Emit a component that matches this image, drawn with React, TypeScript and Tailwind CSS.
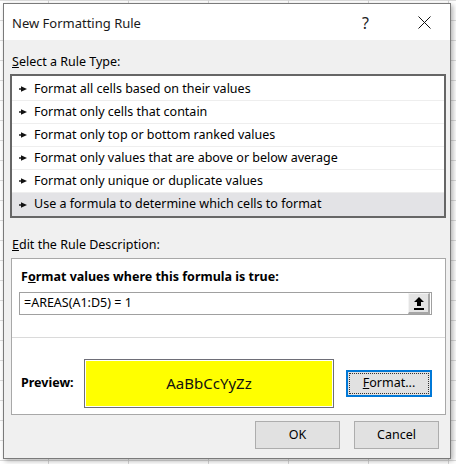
import React from "react";

const Arrow = () => (
  <svg width="8" height="6" viewBox="0 0 8 6" className="shrink-0">
    <rect x="0" y="2.3" width="3" height="1.4" fill="#111" />
    <polygon points="2,0.3 8,3 2,5.7" fill="#111" />
  </svg>
);

const rules = [
  "Format all cells based on their values",
  "Format only cells that contain",
  "Format only top or bottom ranked values",
  "Format only values that are above or below average",
  "Format only unique or duplicate values",
  "Use a formula to determine which cells to format",
];

export default function App() {
  return (
    <div
      className="w-[456px] h-[464px] overflow-hidden bg-white bg-[linear-gradient(90deg,#d6d6d6_1px,transparent_1px),linear-gradient(#dcdcdc_1px,transparent_1px)] bg-[size:80px_20px] bg-[position:48px_0] pt-[3px] pl-[3px] text-[#000]"
      style={{ fontFamily: '"Noto Sans", "Open Sans", sans-serif' }}
    >
      <div className="w-[448px] h-[456px] border border-[#7a7a7a] bg-[#f0f0f0] flex flex-col shadow-[2px_2px_5px_rgba(0,0,0,0.3)]">
        {/* Title bar */}
        <div className="h-[36px] bg-white flex items-center shrink-0">
          <div className="ml-[8px] text-[13px] leading-[20px] text-[#1a1a1a] mt-[2px]">
            New Formatting Rule
          </div>
          <div className="ml-auto mr-[49px] text-[16px] leading-[20px] text-[#222] mt-[2px]">?</div>
          <svg width="13" height="13" viewBox="0 0 13 13" className="mr-[19px] mt-[1px]">
            <path d="M0.5 0.5 L12.5 12.5 M12.5 0.5 L0.5 12.5" stroke="#111" strokeWidth="1" />
          </svg>
        </div>

        {/* Body */}
        <div className="ml-[8px] mt-[12px] text-[12.5px] leading-[20px]">
          <span className="underline">S</span>elect a Rule Type:
        </div>
        <div className="ml-[6px] mt-[2px] w-[436px] border-2 border-[#666666] bg-white pt-[2px] flex flex-col">
          {rules.map((r, i) => (
            <div
              key={r}
              className={
                "h-[23px] flex items-center gap-[7px] pl-[7px] text-[12.5px] " +
                (i === rules.length - 1
                  ? "bg-[#e3e3e6]"
                  : "border-b border-[#eeeeee]")
              }
            >
              <Arrow />
              <span>{r}</span>
            </div>
          ))}
        </div>

        <div className="ml-[8px] mt-[17px] text-[12.5px] leading-[20px]">
          <span className="underline">E</span>dit the Rule Description:
        </div>

        <div className="ml-[7px] mt-[3px] w-[435px] h-[157px] border border-[#a8a8a8] bg-white flex flex-col">
          <div className="ml-[9px] mt-[8px] text-[12.5px] leading-[20px] font-bold">
            F<span className="underline">o</span>rmat values where this formula is true:
          </div>
          <div className="ml-[7px] mt-[5px] w-[413px] h-[23px] border border-[#a0a0a0] flex items-center">
            <span className="ml-[4px] text-[12.5px]">=AREAS(A1:D5) = 1</span>
            <div className="ml-auto mr-px w-[22px] h-[21px] bg-[#e4e4e4] border-t border-l border-t-[#f4f4f4] border-l-[#f4f4f4] border-r-2 border-b-2 border-r-[#a6a6a6] border-b-[#a6a6a6] flex items-center justify-center">
              <svg width="10" height="13" viewBox="0 0 10 13">
                <polygon points="5,0 10,5 7,5 7,9 3,9 3,5 0,5" fill="#000" />
                <rect x="0" y="11" width="10" height="2" fill="#000" />
              </svg>
            </div>
          </div>
          <div className="mt-[22px] h-px bg-[#dadada]" />
          <div className="mt-[21px] flex items-center">
            <div className="ml-[9px] w-[63px] text-[12.5px] font-bold">Preview:</div>
            <div className="w-[250px] h-[49px] border border-[#6e6e78] p-px bg-white">
              <div className="w-full h-full bg-[#ffff00] flex items-center justify-center text-[15px] text-[#111]">
                AaBbCcYyZz
              </div>
            </div>
            <div className="ml-[12px] w-[86px] h-[27px] border-2 border-[#0078d7] bg-[#e1e1e1] p-px">
              <div className="w-full h-full border border-dotted border-[#333] flex items-center justify-center text-[12.5px]">
                <span><span className="underline">F</span>ormat...</span>
              </div>
            </div>
          </div>
        </div>

        <div className="mt-[6px] flex justify-end gap-[14px] mr-[11px]">
          <div className="w-[85px] h-[28px] border border-[#adadad] bg-[#e1e1e1] flex items-center justify-center text-[12.5px]">
            OK
          </div>
          <div className="w-[85px] h-[28px] border border-[#adadad] bg-[#e1e1e1] flex items-center justify-center text-[12.5px]">
            Cancel
          </div>
        </div>
      </div>
    </div>
  );
}
